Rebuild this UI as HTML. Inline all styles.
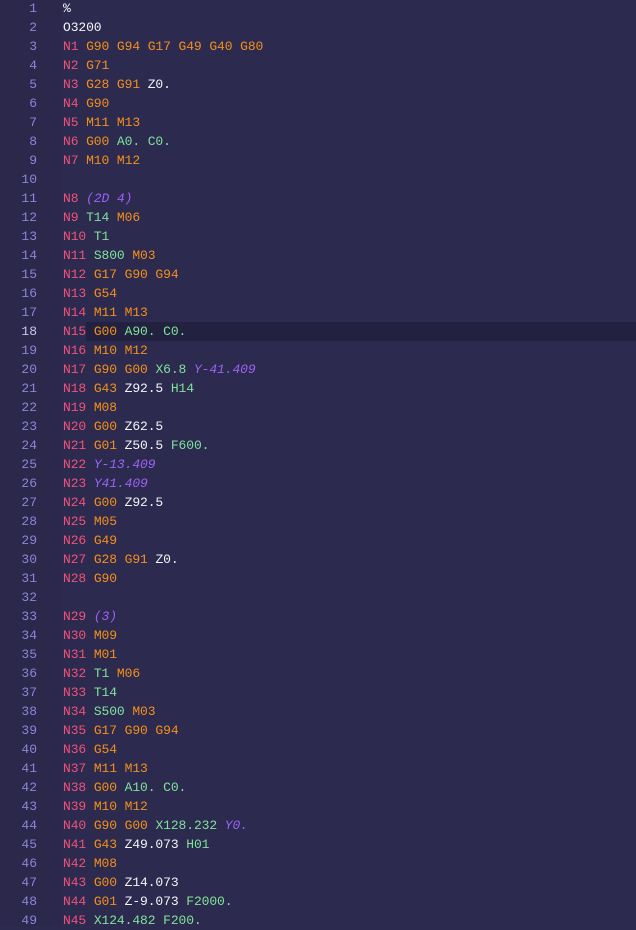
<!DOCTYPE html><html><head><style>
body{margin:0;width:636px;height:926px;overflow:hidden;background:#2d2a4f;font-family:"Liberation Mono",monospace;font-size:13px;letter-spacing:-0.1px}
.g{position:absolute;left:0;top:0;width:62px;height:926px;background:#2b284c}
.hl{position:absolute;left:86px;top:322px;width:550px;height:19px;background:#232140}
.c{position:absolute;left:0;top:-1px}
.l{height:19px;line-height:19px;white-space:pre;position:relative}
.n{display:inline-block;width:37px;text-align:right;color:#8a87d4;margin-right:26px;letter-spacing:0}
.cur .n{color:#c8c6f0}
.r{color:#f0527a}.o{color:#f3901c}.e{color:#7fe39a}.w{color:#f4f4f8}.p{color:#9b62f5;font-style:italic}
</style></head><body><div class="g"></div><div class="hl"></div><div class="c" id="c">
<div class="l"><span class="n">1</span><span class="w">%</span></div>
<div class="l"><span class="n">2</span><span class="w">O3200</span></div>
<div class="l"><span class="n">3</span><span class="r">N1</span> <span class="o">G90 G94 G17 G49 G40 G80</span></div>
<div class="l"><span class="n">4</span><span class="r">N2</span> <span class="o">G71</span></div>
<div class="l"><span class="n">5</span><span class="r">N3</span> <span class="o">G28 G91</span> <span class="w">Z0.</span></div>
<div class="l"><span class="n">6</span><span class="r">N4</span> <span class="o">G90</span></div>
<div class="l"><span class="n">7</span><span class="r">N5</span> <span class="o">M11 M13</span></div>
<div class="l"><span class="n">8</span><span class="r">N6</span> <span class="o">G00</span> <span class="e">A0. C0.</span></div>
<div class="l"><span class="n">9</span><span class="r">N7</span> <span class="o">M10 M12</span></div>
<div class="l"><span class="n">10</span></div>
<div class="l"><span class="n">11</span><span class="r">N8</span> <span class="p">(2D 4)</span></div>
<div class="l"><span class="n">12</span><span class="r">N9</span> <span class="e">T14</span> <span class="o">M06</span></div>
<div class="l"><span class="n">13</span><span class="r">N10</span> <span class="e">T1</span></div>
<div class="l"><span class="n">14</span><span class="r">N11</span> <span class="e">S800</span> <span class="o">M03</span></div>
<div class="l"><span class="n">15</span><span class="r">N12</span> <span class="o">G17 G90 G94</span></div>
<div class="l"><span class="n">16</span><span class="r">N13</span> <span class="o">G54</span></div>
<div class="l"><span class="n">17</span><span class="r">N14</span> <span class="o">M11 M13</span></div>
<div class="l cur"><span class="n">18</span><span class="r">N15</span> <span class="o">G00</span> <span class="e">A90. C0.</span></div>
<div class="l"><span class="n">19</span><span class="r">N16</span> <span class="o">M10 M12</span></div>
<div class="l"><span class="n">20</span><span class="r">N17</span> <span class="o">G90 G00</span> <span class="e">X6.8</span> <span class="p">Y-41.409</span></div>
<div class="l"><span class="n">21</span><span class="r">N18</span> <span class="o">G43</span> <span class="w">Z92.5</span> <span class="e">H14</span></div>
<div class="l"><span class="n">22</span><span class="r">N19</span> <span class="o">M08</span></div>
<div class="l"><span class="n">23</span><span class="r">N20</span> <span class="o">G00</span> <span class="w">Z62.5</span></div>
<div class="l"><span class="n">24</span><span class="r">N21</span> <span class="o">G01</span> <span class="w">Z50.5</span> <span class="e">F600.</span></div>
<div class="l"><span class="n">25</span><span class="r">N22</span> <span class="p">Y-13.409</span></div>
<div class="l"><span class="n">26</span><span class="r">N23</span> <span class="p">Y41.409</span></div>
<div class="l"><span class="n">27</span><span class="r">N24</span> <span class="o">G00</span> <span class="w">Z92.5</span></div>
<div class="l"><span class="n">28</span><span class="r">N25</span> <span class="o">M05</span></div>
<div class="l"><span class="n">29</span><span class="r">N26</span> <span class="o">G49</span></div>
<div class="l"><span class="n">30</span><span class="r">N27</span> <span class="o">G28 G91</span> <span class="w">Z0.</span></div>
<div class="l"><span class="n">31</span><span class="r">N28</span> <span class="o">G90</span></div>
<div class="l"><span class="n">32</span></div>
<div class="l"><span class="n">33</span><span class="r">N29</span> <span class="p">(3)</span></div>
<div class="l"><span class="n">34</span><span class="r">N30</span> <span class="o">M09</span></div>
<div class="l"><span class="n">35</span><span class="r">N31</span> <span class="o">M01</span></div>
<div class="l"><span class="n">36</span><span class="r">N32</span> <span class="e">T1</span> <span class="o">M06</span></div>
<div class="l"><span class="n">37</span><span class="r">N33</span> <span class="e">T14</span></div>
<div class="l"><span class="n">38</span><span class="r">N34</span> <span class="e">S500</span> <span class="o">M03</span></div>
<div class="l"><span class="n">39</span><span class="r">N35</span> <span class="o">G17 G90 G94</span></div>
<div class="l"><span class="n">40</span><span class="r">N36</span> <span class="o">G54</span></div>
<div class="l"><span class="n">41</span><span class="r">N37</span> <span class="o">M11 M13</span></div>
<div class="l"><span class="n">42</span><span class="r">N38</span> <span class="o">G00</span> <span class="e">A10. C0.</span></div>
<div class="l"><span class="n">43</span><span class="r">N39</span> <span class="o">M10 M12</span></div>
<div class="l"><span class="n">44</span><span class="r">N40</span> <span class="o">G90 G00</span> <span class="e">X128.232</span> <span class="p">Y0.</span></div>
<div class="l"><span class="n">45</span><span class="r">N41</span> <span class="o">G43</span> <span class="w">Z49.073</span> <span class="e">H01</span></div>
<div class="l"><span class="n">46</span><span class="r">N42</span> <span class="o">M08</span></div>
<div class="l"><span class="n">47</span><span class="r">N43</span> <span class="o">G00</span> <span class="w">Z14.073</span></div>
<div class="l"><span class="n">48</span><span class="r">N44</span> <span class="o">G01</span> <span class="w">Z-9.073</span> <span class="e">F2000.</span></div>
<div class="l"><span class="n">49</span><span class="r">N45</span> <span class="e">X124.482 F200.</span></div>
</div></body></html>
